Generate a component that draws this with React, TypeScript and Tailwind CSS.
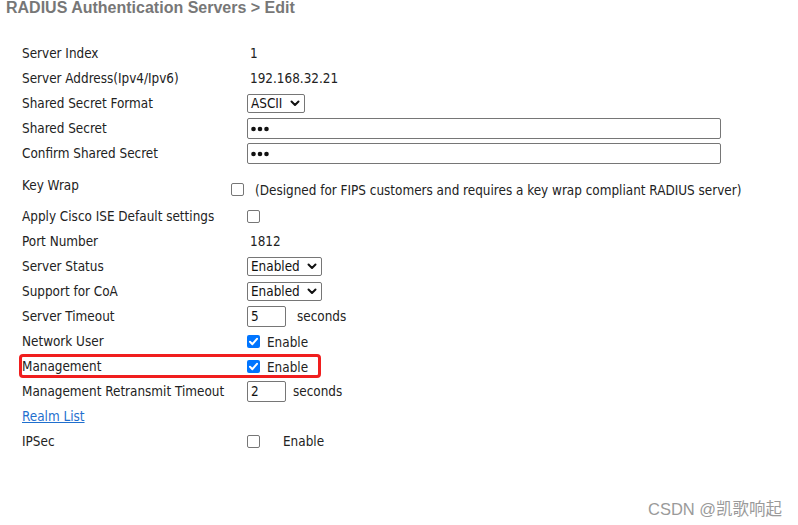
import React from "react";

const Chevron = () => (
  <svg width="10" height="7" viewBox="0 0 10 7" className="shrink-0">
    <polyline points="1.5,1.5 5,5 8.5,1.5" fill="none" stroke="#111" strokeWidth="2" strokeLinecap="round" strokeLinejoin="round" />
  </svg>
);

const Select = ({ value, w }: { value: string; w: string }) => (
  <div className={`${w} h-[19px] border border-[#767676] rounded-[2px] bg-white flex items-center justify-between pl-[3px] pr-[4px] text-[#111]`}>
    <span className="leading-none">{value}</span>
    <Chevron />
  </div>
);

const Box = ({ checked }: { checked?: boolean }) =>
  checked ? (
    <div className="w-[13px] h-[13px] rounded-[2px] bg-[#0075ff] flex items-center justify-center shrink-0">
      <svg width="11" height="11" viewBox="0 0 11 11">
        <polyline points="2,5.8 4.4,8.2 9,2.8" fill="none" stroke="white" strokeWidth="2" strokeLinecap="round" strokeLinejoin="round" />
      </svg>
    </div>
  ) : (
    <div className="w-[13px] h-[13px] rounded-[2px] border border-[#767676] bg-white shrink-0" />
  );

const Dots = () => (
  <svg width="18" height="6" viewBox="0 0 18 6">
    <circle cx="2.5" cy="3" r="2.3" fill="#111" />
    <circle cx="9" cy="3" r="2.3" fill="#111" />
    <circle cx="15.5" cy="3" r="2.3" fill="#111" />
  </svg>
);

const Input = ({ w, value, dots }: { w: string; value?: string; dots?: boolean }) => (
  <div className={`${w} h-[21px] border border-[#767676] rounded-[2px] bg-white flex items-center pl-[3px] text-[#111]`}>
    {dots ? <Dots /> : <span className="mt-[2px]">{value}</span>}
  </div>
);

const Row = ({ label, children, cls = "" }: { label: React.ReactNode; children?: React.ReactNode; cls?: string }) => (
  <div className={`h-[25px] flex items-center ${cls}`}>
    <div className="w-[225px] shrink-0 pt-[2px]">{label}</div>
    <div className="flex items-center">{children}</div>
  </div>
);

export default function App() {
  return (
    <div className="relative w-[798px] h-[525px] bg-white overflow-hidden text-[13.4px] text-[#222]" style={{ fontFamily: '"DejaVu Sans Condensed", "Liberation Sans", Arial, sans-serif' }}>
      <div className="pl-[6px] text-[16px] leading-[16px] font-bold text-[#777]" style={{ fontFamily: '"Liberation Sans", Arial, sans-serif' }}>RADIUS Authentication Servers &gt; Edit</div>
      <div className="pl-[22px] mt-[25px] flex flex-col">
        <Row label="Server Index"><span className="pl-[3px] mt-[2px]">1</span></Row>
        <Row label="Server Address(Ipv4/Ipv6)"><span className="pl-[3px] mt-[2px]">192.168.32.21</span></Row>
        <Row label="Shared Secret Format"><Select value="ASCII" w="w-[58px]" /></Row>
        <Row label="Shared Secret"><Input w="w-[474px]" dots /></Row>
        <Row label="Confirm Shared Secret"><Input w="w-[474px]" dots /></Row>
        <div className="h-[38px] flex items-center">
          <div className="w-[209px] shrink-0 pt-[2px]">Key Wrap</div>
          <div className="flex items-center mt-[10px]">
            <Box />
            <span className="ml-[11px] mt-[2px]">(Designed for FIPS customers and requires a key wrap compliant RADIUS server)</span>
          </div>
        </div>
        <Row label="Apply Cisco ISE Default settings"><Box /></Row>
        <Row label="Port Number"><span className="pl-[3px] mt-[2px]">1812</span></Row>
        <Row label="Server Status"><Select value="Enabled" w="w-[75px]" /></Row>
        <Row label="Support for CoA"><Select value="Enabled" w="w-[75px]" /></Row>
        <Row label="Server Timeout">
          <Input w="w-[39px]" value="5" />
          <span className="ml-[11px] mt-[2px]">seconds</span>
        </Row>
        <Row label="Network User">
          <Box checked />
          <span className="ml-[7px] mt-[4px]">Enable</span>
        </Row>
        <div className="relative">
          <Row label="Management">
            <Box checked />
            <span className="ml-[7px] mt-[4px]">Enable</span>
          </Row>
          <div className="absolute left-[-3px] top-[0px] w-[302px] h-[24px] border-[3px] border-[#f01e1e] rounded-[4px]" />
        </div>
        <Row label="Management Retransmit Timeout">
          <Input w="w-[39px]" value="2" />
          <span className="ml-[7px] mt-[2px]">seconds</span>
        </Row>
        <Row label={<span className="text-[#1f6fce] underline">Realm List</span>} />
        <Row label="IPSec">
          <Box />
          <span className="ml-[23px] mt-[2px]">Enable</span>
        </Row>
      </div>
      <div className="absolute left-[648px] top-[497px] text-[16.5px] text-[#9a9a9a]" style={{ fontFamily: '"Liberation Sans", "Noto Sans CJK SC", sans-serif' }}>CSDN @凯歌响起</div>
    </div>
  );
}
